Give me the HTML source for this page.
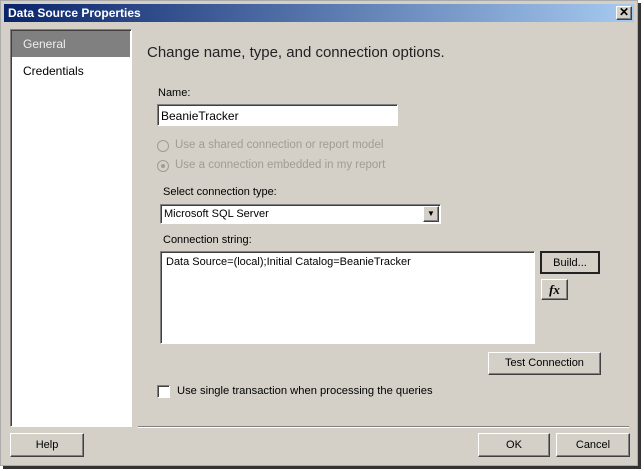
<!DOCTYPE html>
<html><head><style>
*{box-sizing:border-box;margin:0;padding:0}
body{width:644px;height:471px;background:#fff;position:relative;overflow:hidden;font-family:"Liberation Sans",sans-serif;font-size:11px;color:#000}
.a{position:absolute}
.win{left:0;top:0;width:638px;height:466px;background:#d4d0c8;border:1px solid #aaa;box-shadow:3px 3px 0 #333}
.title{left:4px;top:4px;width:630px;height:18px;background:linear-gradient(90deg,#0a246a,#a6caf0);color:#fff;font-weight:bold;font-size:12px;line-height:18px;padding-left:4px}
.btn{background:#d4d0c8;border:1px solid;border-color:#fff #404040 #404040 #fff;box-shadow:inset -1px -1px 0 #808080;text-align:center}
.sunk{background:#fff;border:1px solid;border-color:#808080 #fff #fff #808080;box-shadow:inset 1px 1px 0 #404040}
.g{color:#a09c94}
.rad{width:12px;height:12px;border-radius:50%;border:1px solid #a09c94;background:#d4d0c8}
</style></head><body>
<div class="a win"></div>
<div class="a title">Data Source Properties</div>
<div class="a btn" style="left:616px;top:6px;width:16px;height:14px;font-size:12px;line-height:11px;font-weight:bold">✕</div>
<div class="a sunk" style="left:10px;top:29px;width:122px;height:398px"></div>
<div class="a" style="left:12px;top:31px;width:118px;height:26px;background:#808080;color:#eee;font-size:12px;line-height:26px;padding-left:11px">General</div>
<div class="a" style="left:23px;top:64px;font-size:12px">Credentials</div>
<div class="a" style="left:147px;top:44px;font-size:15px;color:#222">Change name, type, and connection options.</div>
<div class="a" style="left:158px;top:87px">Name:</div>
<div class="a sunk" style="left:157px;top:104px;width:241px;height:22px;padding:4px 0 0 3px;font-size:12px">BeanieTracker</div>
<div class="a rad" style="left:157px;top:140px"></div>
<div class="a g" style="left:175px;top:139px;font-size:11.5px">Use a shared connection or report model</div>
<div class="a rad" style="left:157px;top:160px"></div>
<div class="a" style="left:161px;top:164px;width:4px;height:4px;border-radius:50%;background:#a09c94"></div>
<div class="a g" style="left:175px;top:159px;font-size:11.5px">Use a connection embedded in my report</div>
<div class="a" style="left:163px;top:186px">Select connection type:</div>
<div class="a sunk" style="left:160px;top:204px;width:281px;height:20px;padding:3px 0 0 3px">Microsoft SQL Server</div>
<div class="a btn" style="left:423px;top:206px;width:16px;height:16px;font-size:8px;line-height:14px">▼</div>
<div class="a" style="left:163px;top:234px">Connection string:</div>
<div class="a sunk" style="left:160px;top:251px;width:375px;height:93px;padding:4px 0 0 5px">Data Source=(local);Initial Catalog=BeanieTracker</div>
<div class="a btn" style="left:540px;top:251px;width:60px;height:23px;line-height:20px;border:2px solid #222;box-shadow:none">Build...</div>
<div class="a btn" style="left:541px;top:279px;width:27px;height:21px;line-height:19px;font-family:'Liberation Serif',serif;font-style:italic;font-weight:bold;font-size:13px">fx</div>
<div class="a btn" style="left:488px;top:352px;width:113px;height:23px;line-height:21px">Test Connection</div>
<div class="a sunk" style="left:157px;top:385px;width:13px;height:13px"></div>
<div class="a" style="left:177px;top:385px;font-size:11.2px">Use single transaction when processing the queries</div>
<div class="a" style="left:138px;top:426px;width:491px;height:2px;border-top:1px solid #808080;border-bottom:1px solid #fff"></div>
<div class="a btn" style="left:10px;top:433px;width:74px;height:24px;line-height:22px">Help</div>
<div class="a btn" style="left:478px;top:433px;width:72px;height:24px;line-height:22px">OK</div>
<div class="a btn" style="left:556px;top:433px;width:74px;height:24px;line-height:22px">Cancel</div>
</body></html>
